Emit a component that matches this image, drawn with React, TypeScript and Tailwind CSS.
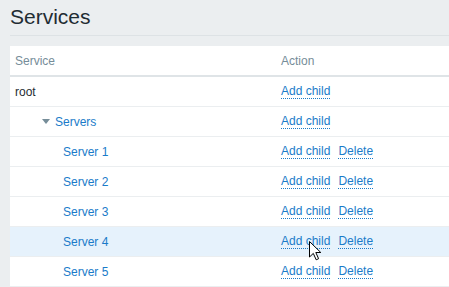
const font = { fontFamily: '"Liberation Sans", Arial, sans-serif' };

interface Row {
  name: string;
  level: number;
  canDelete: boolean;
  hovered?: boolean;
}

const rows: Row[] = [
  { name: "root", level: 0, canDelete: false },
  { name: "Servers", level: 1, canDelete: false },
  { name: "Server 1", level: 2, canDelete: true },
  { name: "Server 2", level: 2, canDelete: true },
  { name: "Server 3", level: 2, canDelete: true },
  { name: "Server 4", level: 2, canDelete: true, hovered: true },
  { name: "Server 5", level: 2, canDelete: true },
];

function Link({ children }: { children: React.ReactNode }) {
  return (
    <span className="inline-block leading-[14px] text-[#1a7bc9] border-b border-dotted border-[#1a7bc9] cursor-pointer">
      {children}
    </span>
  );
}

function Cursor() {
  return (
    <svg
      className="absolute left-[309px] top-[241px]"
      width="14"
      height="21"
      viewBox="0 0 14 21"
    >
      <path
        d="M0.5 0.5 L0.5 16 L4.3 12.4 L7.2 18.8 L9.6 17.7 L6.8 11.5 L11.8 11.5 Z"
        fill="#fff"
        stroke="#000"
        strokeWidth="1"
        strokeLinejoin="round"
      />
    </svg>
  );
}

export default function App() {
  return (
    <div
      className="relative w-[449px] h-[287px] overflow-hidden bg-[#ebeef0] text-[12px] text-[#1f2c33]"
      style={font}
    >
      <div className="pl-[10px]">
        <div className="h-[36px] border-b border-[#dde2e5] pt-[6px]">
          <h1 className="text-[21px] leading-[21px] text-[#1f2c33]">Services</h1>
        </div>

        <div className="mt-[10px] w-[480px] bg-white">
          <div className="flex items-center h-[31px] border-b-2 border-[#dfe4e7] text-[#768d99]">
            <div className="w-[266px] pl-[5px]">Service</div>
            <div className="pl-[5px]">Action</div>
          </div>

          {rows.map((row) => (
            <div
              key={row.name}
              className={`flex items-center h-[30px] border-b border-[#ebeef0] ${
                row.hovered ? "bg-[#e6f2fc]" : "bg-white"
              }`}
            >
              <div className="w-[266px] pl-[5px] flex items-center">
                {row.level === 0 && <span>{row.name}</span>}
                {row.level === 1 && (
                  <>
                    <svg className="ml-[27px] mr-[5px]" width="8" height="5" viewBox="0 0 8 5">
                      <path d="M0 0 L8 0 L4 5 Z" fill="#768d99" />
                    </svg>
                    <span className="text-[#1a7bc9]">{row.name}</span>
                  </>
                )}
                {row.level === 2 && (
                  <span className="pl-[48px] text-[#1a7bc9]">{row.name}</span>
                )}
              </div>
              <div className="pl-[5px] flex items-center gap-[8px]">
                <Link>Add child</Link>
                {row.canDelete && <Link>Delete</Link>}
              </div>
            </div>
          ))}
        </div>
      </div>
      <Cursor />
    </div>
  );
}
